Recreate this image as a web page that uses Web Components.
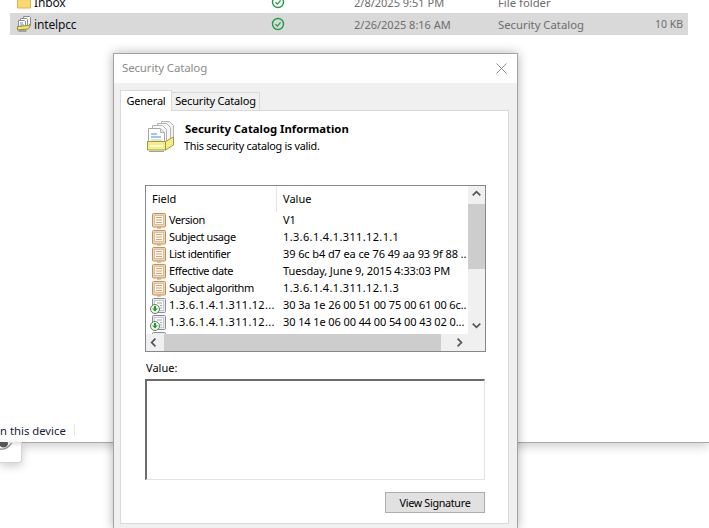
<!DOCTYPE html>
<html>
<head>
<meta charset="utf-8">
<title>Security Catalog</title>
<style>
  html, body { margin: 0; height: 100%; background: #fff; overflow: hidden; }
  body { font: 11px "Noto Sans", "Open Sans", sans-serif; color: #000; }
</style>
</head>
<body>
<explorer-window>
  <file-row icon="folder" date="2/8/2025 9:51 PM" type="File folder">Inbox</file-row>
  <file-row icon="catalog" date="2/26/2025 8:16 AM" type="Security Catalog" size="10 KB" selected>intelpcc</file-row>
  <span slot="status">n this device</span>
</explorer-window>

<catalog-dialog heading="Security Catalog">
  <field-row icon="prop" value="V1">Version</field-row>
  <field-row icon="prop" style="--value-track:.36px" value="1.3.6.1.4.1.311.12.1.1">Subject usage</field-row>
  <field-row icon="prop" value="39 6c b4 d7 ea ce 76 49 aa 93 9f 88 ..">List identifier</field-row>
  <field-row icon="prop" value="Tuesday, June 9, 2015 4:33:03 PM">Effective date</field-row>
  <field-row icon="prop" style="--value-track:.36px" value="1.3.6.1.4.1.311.12.1.3">Subject algorithm</field-row>
  <field-row icon="ext" style="--field-track:.34px" value="30 3a 1e 26 00 51 00 75 00 61 00 6c..">1.3.6.1.4.1.311.12...</field-row>
  <field-row icon="ext" style="--field-track:.34px" value="30 14 1e 06 00 44 00 54 00 43 02 0...">1.3.6.1.4.1.311.12...</field-row>
  <field-row icon="ext"></field-row>
</catalog-dialog>

<script>
const ICONS = {
  folder: `<svg width="16" height="16" viewBox="0 0 16 16"><path d="M1.5 3.5h5l1.5 1.5h6.500v9h-13z" fill="#fbd774" stroke="#e0b44c"/></svg>`,
  check: `<svg width="14" height="14" viewBox="0 0 14 14"><circle cx="7" cy="7" r="5.500" fill="none" stroke="#1f9d45" stroke-width="1.400"/><path d="M4.500 7.200l1.900 1.900 3.200-3.700" fill="none" stroke="#1f9d45" stroke-width="1.300"/></svg>`,
  catalog: `<svg width="16" height="16" viewBox="0 0 16 16">
    <path d="M7.500 .5h6l1 1v8h-7z" fill="#f4f4f4" stroke="#8c8c8c"/>
    <path d="M4.500 2.500h6l1 1v7h-7z" fill="#fafafa" stroke="#8c8c8c"/>
    <path d="M2.500 4.500h6l1 1v6h-7z" fill="#fff" stroke="#8c8c8c"/>
    <path d="M4 7h3M4 9h4" stroke="#4a90d9"/>
    <path d="M1.500 10.500l11-1 2-2-1 4-2 1.500-10 1z" fill="#f0e96c" stroke="#8f8a3a"/>
    <path d="M2.500 15h8" stroke="#6b6b6b"/>
  </svg>`,
  catalogLarge: `<svg width="30" height="32" viewBox="0 0 30 32">
    <path d="M14.500 .5h8l4 4v16h-12z" fill="#f2f2f2" stroke="#b4b4b4"/>
    <path d="M10.500 2.500h9l4 4v17h-13z" fill="#f7f7f7" stroke="#b4b4b4"/>
    <path d="M5.500 4.500h10l4 4v18h-14z" fill="#f9f9f9" stroke="#b4b4b4"/>
    <path d="M1.500 7.500h12l4 4v15h-16z" fill="#fff" stroke="#a8a8a8"/>
    <path d="M13.500 7.500v4h4" fill="#e6e6e6" stroke="#b4b4b4"/>
    <path d="M4 13h6M4 16h10" stroke="#3f8fdb"/>
    <path d="M4 19h11" stroke="#c4c4c4"/>
    <path d="M.5 20.500h18l8-4.500v8l-8 5h-18z" fill="#f4ef80" stroke="#9c9850"/>
    <path d="M18.500 20.500v8.500" stroke="#9c9850"/>
    <path d="M3 25h13" stroke="#fff" stroke-width="1.400"/>
    <path d="M2 30.500h15" stroke="#a0a0a0"/>
  </svg>`,
  prop: `<svg width="14" height="16" viewBox="0 0 14 16">
    <rect x=".5" y=".5" width="13" height="13.500" rx="1" fill="#f0d4b4" stroke="#c0925f"/>
    <rect x="2.500" y="2.500" width="9" height="9" fill="#fff8ee" stroke="#e0bd94"/>
    <path d="M4 4.500h6M4 7h6M4 9.500h6" stroke="#c8a682"/>
    <path d="M5 15h4" stroke="#c0925f"/>
  </svg>`,
  ext: `<svg width="16" height="16" viewBox="0 0 16 16">
    <rect x="2.500" y=".5" width="13" height="14" rx="1" fill="#e9ebee" stroke="#8a8f96"/>
    <rect x="4.500" y="2.500" width="9" height="10" fill="#fbfbfb" stroke="#c6cace"/>
    <path d="M7 5h5M10 7.500h2M10 10h2" stroke="#a0a5ab"/>
    <circle cx="5" cy="11" r="4.500" fill="#eef7ea" stroke="#69786a"/>
    <path d="M4 8h2v2.500h1.800l-2.800 3-2.800-3h1.800z" fill="#1e9a2e"/>
  </svg>`
};

class UiIcon extends HTMLElement {
  connectedCallback() {
    this.attachShadow({ mode: 'open' });
    this.shadowRoot.innerHTML = `
      <style>
        :host { display: inline-flex; flex: none; }
        svg { display: block; }
      </style>
      ${ICONS[this.getAttribute('name')] || ''}
    `;
  }
}
customElements.define('ui-icon', UiIcon);

class FileRow extends HTMLElement {
  connectedCallback() {
    this.attachShadow({ mode: 'open' });
    this.shadowRoot.innerHTML = `
      <style>
        :host {
          display: grid;
          grid-template-columns: 18px 237px 83px 144px 1fr auto;
          align-items: center;
          height: 22px;
          padding: 0 5px 0 6px;
          font-size: 12px;
          white-space: nowrap;
        }
        :host([selected]) { background: #d9d9d9; }
        .name { color: #101020; letter-spacing: -.15px; }
        .sub { color: #6d6d6d; font-size: 11px; }
        .type { font-size: 11.300px; }
        .size { font-size: 10.500px; }
        .state { display: flex; }
      </style>
      <ui-icon name="${this.getAttribute('icon')}"></ui-icon>
      <span class="name"><slot></slot></span>
      <span class="state"><ui-icon name="check"></ui-icon></span>
      <span class="sub">${this.getAttribute('date') || ''}</span>
      <span class="sub type">${this.getAttribute('type') || ''}</span>
      <span class="sub size">${this.getAttribute('size') || ''}</span>
    `;
  }
}
customElements.define('file-row', FileRow);

class ExplorerWindow extends HTMLElement {
  connectedCallback() {
    this.attachShadow({ mode: 'open' });
    this.shadowRoot.innerHTML = `
      <style>
        :host {
          position: absolute;
          left: 0; top: 0; right: 0;
          height: 443px;
          z-index: 0;
          box-sizing: border-box;
          display: flex;
          flex-direction: column;
          background: #fff;
          border-bottom: 1px solid #a8a8a8;
          box-shadow: 0 3px 10px rgba(0,0,0,.2);
        }
        .rows { margin: -9px 21px 0 10px; }
        .status {
          margin-top: auto;
          height: 22px;
          padding-bottom: 2px;
          box-sizing: border-box;
          display: flex;
          align-items: center;
          gap: 8px;
          font-size: 11.300px;
          color: #1b1b3a;
          white-space: nowrap;
        }
        .sep { width: 1px; height: 12px; background: #e8e8e8; }
        .eye {
          position: absolute;
          left: 0; top: 442px;
          width: 21px; height: 20px;
          background: linear-gradient(#e2e2e2, #fff 5px);
          border: 1px solid #d4d4d4;
          border-width: 0 1px 1px 0;
          border-radius: 0 0 3px 0;
          box-shadow: 0 3px 10px rgba(0,0,0,.2);
        }
        .eye svg { display: block; }
      </style>
      <div class="rows"><slot></slot></div>
      <div class="status"><slot name="status"></slot><span class="sep"></span></div>
      <div class="eye"><svg width="12" height="9" viewBox="0 0 12 9"><path d="M0 7q7 1 11.500-6" fill="none" stroke="#8a8a8a" stroke-width="1.300"/><ellipse cx="3.500" cy="1.500" rx="4.500" ry="4" fill="#555"/></svg></div>
    `;
  }
}
customElements.define('explorer-window', ExplorerWindow);

class FieldRow extends HTMLElement {
  connectedCallback() {
    this.attachShadow({ mode: 'open' });
    const icon = this.getAttribute('icon');
    this.shadowRoot.innerHTML = `
      <style>
        :host {
          flex: none;
          display: grid;
          grid-template-columns: 136px 1fr;
          align-items: center;
          height: 17px;
          font-size: 11px;
          white-space: nowrap;
        }
        .field { display: flex; align-items: center; gap: 2px; padding-left: ${icon === 'ext' ? '4px' : '6px'}; overflow: hidden; }
        .field span { position: relative; left: 1px; top: -1px; letter-spacing: var(--field-track, -.4px); }
        .value { position: relative; top: -1px; padding-left: 1px; overflow: hidden; letter-spacing: var(--value-track, -.1px); }
      </style>
      <div class="field"><ui-icon name="${icon}"></ui-icon><span><slot></slot></span></div>
      <div class="value">${this.getAttribute('value') || ''}</div>
    `;
  }
}
customElements.define('field-row', FieldRow);

class ScrollBar extends HTMLElement {
  connectedCallback() {
    this.attachShadow({ mode: 'open' });
    const vertical = this.hasAttribute('vertical');
    const before = this.getAttribute('before');
    const size = this.getAttribute('size');
    const a = vertical ? 'M5 10l4-4 4 4' : 'M10 5l-4 4 4 4';
    const b = vertical ? 'M5 7l4 4 4-4' : 'M7 5l4 4-4 4';
    this.shadowRoot.innerHTML = `
      <style>
        :host {
          display: flex;
          flex-direction: ${vertical ? 'column' : 'row'};
          background: #f0f0f0;
          min-width: 0; min-height: 0;
        }
        .arrow { flex: none; width: 17px; height: 17px; }
        .arrow svg { display: block; }
        .gap { flex: none; ${vertical ? 'height' : 'width'}: ${before}px; }
        .thumb { flex: none; ${vertical ? 'height' : 'width'}: ${size}px; background: #cdcdcd; }
        .rest { flex: 1; }
      </style>
      <div class="arrow"><svg width="17" height="17" viewBox="0 0 18 18"><path d="${a}" fill="none" stroke="#555" stroke-width="1.800"/></svg></div>
      <div class="gap"></div>
      <div class="thumb"></div>
      <div class="rest"></div>
      <div class="arrow"><svg width="17" height="17" viewBox="0 0 18 18"><path d="${b}" fill="none" stroke="#555" stroke-width="1.800"/></svg></div>
    `;
  }
}
customElements.define('scroll-bar', ScrollBar);

class FieldList extends HTMLElement {
  connectedCallback() {
    this.attachShadow({ mode: 'open' });
    this.shadowRoot.innerHTML = `
      <style>
        :host {
          display: grid;
          grid-template-columns: 1fr 17px;
          grid-template-rows: 1fr 17px;
          height: 167px;
          box-sizing: border-box;
          border: 1px solid #828790;
          background: #fff;
        }
        .pane { display: flex; flex-direction: column; overflow: hidden; min-width: 0; min-height: 0; }
        .head {
          flex: none;
          display: grid;
          grid-template-columns: 130px 1fr;
          height: 26px;
          font-size: 11px;
        }
        .head div { display: flex; align-items: center; padding: 0 0 2px 6px; }
        .head div + div { border-left: 1px solid #e5e5e5; }
        .corner { background: #f0f0f0; }
      </style>
      <div class="pane">
        <div class="head"><div>Field</div><div>Value</div></div>
        <slot></slot>
      </div>
      <scroll-bar vertical before="1" size="65"></scroll-bar>
      <scroll-bar before="1" size="277"></scroll-bar>
      <div class="corner"></div>
    `;
  }
}
customElements.define('field-list', FieldList);

class CatalogDialog extends HTMLElement {
  connectedCallback() {
    this.attachShadow({ mode: 'open' });
    this.shadowRoot.innerHTML = `
      <style>
        :host {
          position: absolute;
          left: 113px; top: 53px;
          width: 405px;
          box-sizing: border-box;
          border: 1px solid #a3a3a3;
          background: #f0f0f0;
          box-shadow: 0 0 10px rgba(0,0,0,.3);
          font-size: 11px;
        }
        .title {
          height: 29px;
          box-sizing: border-box;
          padding: 0 10px 1px 8px;
          display: flex;
          align-items: center;
          justify-content: space-between;
          background: #fff;
          color: #8c8c8c;
          font-size: 11.500px;
          letter-spacing: -.15px;
        }
        .title span { position: relative; top: -1px; }
        .title svg { display: block; }
        .body { padding: 7px 8px 4px 6px; }
        .tabs { display: flex; align-items: flex-end; height: 21px; margin-bottom: -1px; position: relative; }
        .tab {
          box-sizing: border-box;
          height: 19px;
          padding-bottom: 2px;
          display: flex;
          align-items: center;
          justify-content: center;
          border: 1px solid #d9d9d9;
          white-space: nowrap;
        }
        .tab.on { width: 52px; height: 21px; background: #fff; border-bottom: 0; letter-spacing: -.25px; }
        .tab.off { width: 88px; border-left: 0; background: #f0f0f0; letter-spacing: -.2px; }
        .panel {
          border: 1px solid #d9d9d9;
          background: #fff;
          padding: 10px 23px 10px 24px;
        }
        .info { display: flex; height: 32px; padding-left: 2px; gap: 8px; }
        .info h1 { margin: 0; font-size: 11.300px; line-height: 16px; font-weight: 700; }
        .info p { margin: 1px 0 0 -1px; line-height: 16px; font-size: 10.800px; letter-spacing: -.25px; }
        .list { margin: 32px -1px 0 0; }
        .label { margin-top: 8px; line-height: 16px; padding-left: 1px; }
        .box {
          margin-top: 3px;
          height: 101px;
          box-sizing: border-box;
          border: 2px solid;
          border-color: #6d6d6d #e3e3e3 #e3e3e3 #6d6d6d;
          border-width: 2px 1px 1px 2px;
          background: #fff;
        }
        .actions { display: flex; justify-content: flex-end; margin-top: 12px; }
        button {
          width: 100px; height: 21px;
          padding: 0;
          font: inherit;
          font-size: 10.800px;
          letter-spacing: -.33px;
          color: #000;
          background: #e1e1e1;
          border: 1px solid #adadad;
        }
      </style>
      <div class="title">
        <span>${this.getAttribute('heading')}</span>
        <svg width="11" height="11" viewBox="0 0 11 11"><path d="M.5 .5l10 10M10.500 .5l-10 10" stroke="#8a8a8a"/></svg>
      </div>
      <div class="body">
        <div class="tabs">
          <div class="tab on">General</div>
          <div class="tab off">Security Catalog</div>
        </div>
        <div class="panel">
          <div class="info">
            <ui-icon name="catalogLarge"></ui-icon>
            <div>
              <h1>Security Catalog Information</h1>
              <p>This security catalog is valid.</p>
            </div>
          </div>
          <field-list class="list"><slot></slot></field-list>
          <div class="label">Value:</div>
          <div class="box"></div>
          <div class="actions"><button>View Signature</button></div>
        </div>
      </div>
    `;
  }
}
customElements.define('catalog-dialog', CatalogDialog);
</script>
</body>
</html>
